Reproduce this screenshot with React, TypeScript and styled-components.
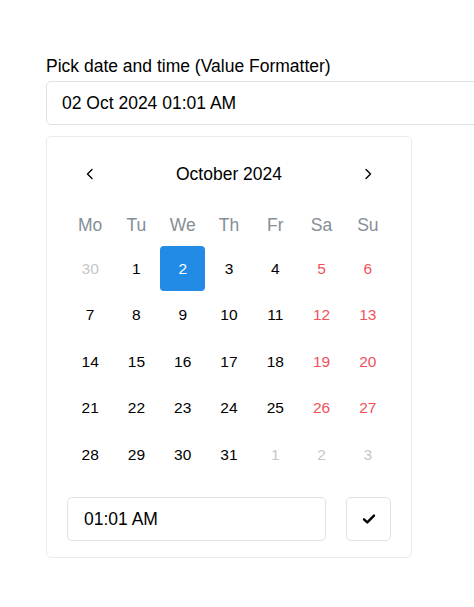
import { createGlobalStyle, styled } from "styled-components";

const GlobalStyle = createGlobalStyle`
  body {
    margin: 0;
    background: #fff;
    font-family: "Liberation Sans", Arial, sans-serif;
    color: #000;
    overflow: hidden;
  }
`;

type Day = { n: number; outside?: boolean; weekend?: boolean; selected?: boolean };

const weekdays = ["Mo", "Tu", "We", "Th", "Fr", "Sa", "Su"];

function buildWeeks(): Day[][] {
  const cells: Day[] = [{ n: 30, outside: true }];
  for (let d = 1; d <= 31; d++) cells.push({ n: d });
  cells.push({ n: 1, outside: true }, { n: 2, outside: true }, { n: 3, outside: true });
  const weeks: Day[][] = [];
  for (let i = 0; i < cells.length; i += 7) {
    weeks.push(
      cells.slice(i, i + 7).map((c, j) => ({
        ...c,
        weekend: j >= 5,
        selected: !c.outside && c.n === 2,
      })),
    );
  }
  return weeks;
}

function App() {
  const weeks = buildWeeks();
  return (
    <>
      <GlobalStyle />
      <Page>
        <Label>Pick date and time (Value Formatter)</Label>
        <Input>02 Oct 2024 01:01 AM</Input>
        <Dropdown>
          <Header>
            <NavButton aria-label="Previous month">
              <svg width="16" height="16" viewBox="0 0 16 16" fill="none">
                <path d="M10 3.5L5.5 8l4.5 4.5" stroke="#000" strokeWidth="1.4" strokeLinecap="round" strokeLinejoin="round" />
              </svg>
            </NavButton>
            <Title>October 2024</Title>
            <NavButton aria-label="Next month">
              <svg width="16" height="16" viewBox="0 0 16 16" fill="none">
                <path d="M6 3.5l4.5 4.5L6 12.5" stroke="#000" strokeWidth="1.4" strokeLinecap="round" strokeLinejoin="round" />
              </svg>
            </NavButton>
          </Header>
          <Grid>
            {weekdays.map((w) => (
              <Weekday key={w}>{w}</Weekday>
            ))}
            {weeks.flat().map((d, i) => (
              <DayCell key={i} $outside={d.outside} $weekend={d.weekend} $selected={d.selected}>
                {d.n}
              </DayCell>
            ))}
          </Grid>
          <TimeRow>
            <TimeInput>01:01 AM</TimeInput>
            <CheckButton aria-label="Submit">
              <svg width="18" height="18" viewBox="0 0 18 18" fill="none">
                <path d="M4 9.3l3.3 3.1 6.7-6.8" stroke="#000" strokeWidth="2.4" strokeLinecap="round" strokeLinejoin="round" />
              </svg>
            </CheckButton>
          </TimeRow>
        </Dropdown>
      </Page>
    </>
  );
}

const Page = styled.div`
  padding: 56px 0 0 46px;
  display: flex;
  flex-direction: column;
`;

const Label = styled.label`
  font-size: 17.5px;
  line-height: 20px;
  font-weight: 500;
  color: #000;
  margin-bottom: 5px;
`;

const Input = styled.div`
  box-sizing: border-box;
  width: 440px;
  height: 44px;
  border: 1px solid #dee2e6;
  border-radius: 5px;
  padding: 0 15px;
  display: flex;
  align-items: center;
  font-size: 17.5px;
  color: #000;
`;

const Dropdown = styled.div`
  box-sizing: border-box;
  width: 366px;
  margin-top: 11px;
  border: 1px solid #e9ecef;
  border-radius: 5px;
  padding: 19px 20px 16px 20px;
  background: #fff;
`;

const Header = styled.div`
  display: flex;
  align-items: center;
  justify-content: space-between;
  height: 36px;
  margin-bottom: 7px;
`;

const NavButton = styled.button`
  width: 46px;
  height: 36px;
  border: none;
  background: transparent;
  display: flex;
  align-items: center;
  justify-content: center;
  padding: 0;
  cursor: pointer;
`;

const Title = styled.div`
  font-size: 17.5px;
  color: #000;
`;

const Grid = styled.div`
  display: grid;
  grid-template-columns: repeat(7, 1fr);
  grid-auto-rows: 46.5px;
`;

const Weekday = styled.div`
  display: flex;
  align-items: center;
  justify-content: center;
  padding-top: 6px;
  font-size: 17.5px;
  color: #868e96;
`;

const DayCell = styled.div<{ $outside?: boolean; $weekend?: boolean; $selected?: boolean }>`
  display: flex;
  align-items: center;
  justify-content: center;
  width: 45px;
  height: 45px;
  justify-self: center;
  align-self: center;
  border-radius: 4px;
  font-size: 15.5px;
  color: ${(p) => (p.$selected ? "#fff" : p.$outside ? "#c4c8cc" : p.$weekend ? "#f0525b" : "#000")};
  background: ${(p) => (p.$selected ? "#228be6" : "transparent")};
`;

const TimeRow = styled.div`
  display: flex;
  align-items: center;
  gap: 20px;
  margin-top: 19px;
`;

const TimeInput = styled.div`
  box-sizing: border-box;
  width: 260px;
  height: 44px;
  border: 1px solid #dee2e6;
  border-radius: 5px;
  padding: 0 16px;
  display: flex;
  align-items: center;
  font-size: 17.5px;
  color: #000;
`;

const CheckButton = styled.button`
  box-sizing: border-box;
  width: 45px;
  height: 44px;
  border: 1px solid #dee2e6;
  border-radius: 5px;
  background: #fff;
  display: flex;
  align-items: center;
  justify-content: center;
  padding: 0;
`;

export default App;
